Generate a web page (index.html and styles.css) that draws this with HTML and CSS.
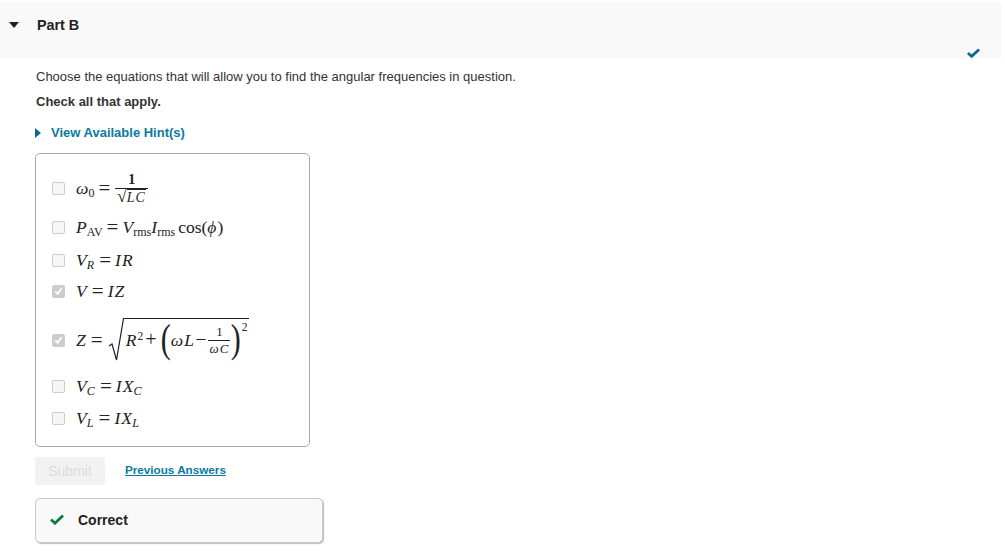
FILE: index.html
```html
<!DOCTYPE html>
<html lang="en">
<head>
<meta charset="utf-8">
<title>Part B</title>
<link rel="stylesheet" href="styles.css">
</head>
<body>
<section class="part">
  <header class="part-head">
    <span class="caret-down"></span>
    <h2 class="part-title">Part B</h2>
    <svg class="done" viewBox="0 0 14 10" width="13" height="10"><path d="M1 5l4 3.600L13 1.200" fill="none" stroke="#0a6b8a" stroke-width="3"/></svg>
  </header>
  <div class="part-body">
    <p class="prompt">Choose the equations that will allow you to find the angular frequencies in question.</p>
    <p class="instr">Check all that apply.</p>
    <div class="hint"><span class="caret-right"></span><span>View Available Hint(s)</span></div>
    <div class="choices">
      <div class="row r1">
        <span class="box"></span>
        <span class="m"><i>ω</i><sub>0</sub><span class="eq">=</span><span class="frac"><span class="num">1</span><span class="den"><span class="rt">√</span><i class="ol">LC</i></span></span></span>
      </div>
      <div class="row r2">
        <span class="box"></span>
        <span class="m"><i>P</i><sub>AV</sub><span class="eq">=</span><i>V</i><sub>rms</sub><i>I</i><sub>rms</sub><span class="fn">cos(<i>ϕ</i>)</span></span>
      </div>
      <div class="row r3">
        <span class="box"></span>
        <span class="m"><i>V</i><sub><i>R</i></sub><span class="eq">=</span><i>IR</i></span>
      </div>
      <div class="row r4">
        <span class="box on"><svg viewBox="0 0 12 12" width="12" height="12"><path d="M2.500 6.500l2.500 2.500L9.500 3" fill="none" stroke="#fff" stroke-width="2"/></svg></span>
        <span class="m"><i>V</i><span class="eq">=</span><i>IZ</i></span>
      </div>
      <div class="row r5">
        <span class="box on"><svg viewBox="0 0 12 12" width="12" height="12"><path d="M2.500 6.500l2.500 2.500L9.500 3" fill="none" stroke="#fff" stroke-width="2"/></svg></span>
        <span class="m mz"><span class="zlead"><i>Z</i><span class="eq">=</span></span>
          <svg class="bigroot" viewBox="0 0 18 44" width="18" height="44"><path d="M1 28l3-2 4.500 16L15.500 .5H18" fill="none" stroke="#222" stroke-width="1.200"/></svg>
          <span class="rad"><span class="radin"><i>R</i><sup>2</sup><span class="pl">+</span><span class="paren">(</span><i>ωL</i><span class="mi">−</span><span class="frac small"><span class="num">1</span><span class="den"><i>ωC</i></span></span><span class="paren">)</span><sup class="sq">2</sup></span></span>
        </span>
      </div>
      <div class="row r6">
        <span class="box"></span>
        <span class="m"><i>V</i><sub><i>C</i></sub><span class="eq">=</span><i>IX</i><sub><i>C</i></sub></span>
      </div>
      <div class="row r7">
        <span class="box"></span>
        <span class="m"><i>V</i><sub><i>L</i></sub><span class="eq">=</span><i>IX</i><sub><i>L</i></sub></span>
      </div>
    </div>
    <div class="actions">
      <button class="submit" type="button" disabled>Submit</button>
      <a class="prev" href="#">Previous Answers</a>
    </div>
    <div class="result">
      <svg viewBox="0 0 14 11" width="14" height="11"><path d="M1 5.500l4 3.700L13 1.500" fill="none" stroke="#0b7a3e" stroke-width="2.800"/></svg>
      <span>Correct</span>
    </div>
  </div>
</section>
</body>
</html>
```
FILE: styles.css
```css
* { box-sizing: border-box; }
html, body { margin: 0; padding: 0; background: #fff; }
body { font-family: "Liberation Sans", Arial, sans-serif; font-size: 13px; color: #333; width: 1005px; height: 557px; overflow: hidden; }
.part { padding-top: 2px; width: 1001px; }
.part-head { position: relative; height: 56px; background: #f9f9f9; display: flex; align-items: flex-start; padding: 15px 0 0 9px; }
.caret-down { width: 0; height: 0; margin-top: 5px; border-left: 5.500px solid transparent; border-right: 5.500px solid transparent; border-top: 6px solid #222; }
.part-title { margin: 0 0 0 18px; font-size: 14.300px; line-height: 16px; font-weight: 700; color: #222; }
.done { position: absolute; left: 967px; top: 46px; }
.part-body { padding: 11px 0 0 35px; }
.prompt { margin: 0 0 0 1px; font-size: 13px; line-height: 16px; color: #333; }
.instr { margin: 9px 0 0 1px; font-size: 13px; line-height: 16px; font-weight: 700; color: #333; }
.hint { margin-top: 15px; display: flex; align-items: center; gap: 10px; font-size: 13px; line-height: 16px; font-weight: 700; color: #0b7a9e; }
.caret-right { width: 0; height: 0; border-top: 5px solid transparent; border-bottom: 5px solid transparent; border-left: 6px solid #0b6a8a; }
.choices { margin-top: 12px; width: 275px; height: 294px; border: 1px solid #a8a8a8; border-radius: 5px; padding: 14px 0 0 16px; }
.row { display: flex; align-items: center; gap: 11px; }
.r1 { height: 40px; }
.r2 { height: 38px; }
.r3 { height: 28px; }
.r4 { height: 34px; }
.r5 { height: 64px; }
.r6 { height: 28px; }
.r7 { height: 36px; }
.box { flex: none; width: 13px; height: 13px; border: 1px solid #ccc; border-radius: 2px; background: #f6f6f6; display: flex; align-items: center; justify-content: center; }
.box.on { background: #ccc; border-color: #ccc; }
.m { display: inline-flex; align-items: baseline; font-family: "Liberation Serif", "DejaVu Serif", serif; font-size: 17.500px; color: #222; white-space: nowrap; line-height: 1; }
.m i { letter-spacing: 1.100px; }
.m sub { font-size: 12px; vertical-align: baseline; position: relative; top: 3px; line-height: 0; margin-left: -1px; letter-spacing: 0; }
.m sup { font-size: 11.500px; position: relative; top: -6px; line-height: 0; vertical-align: baseline; }
.eq { margin: 0 4px; font-size: 21px; line-height: 17px; position: relative; top: 1px; font-style: normal; }
.fn { margin-left: 3px; }
.frac { display: inline-flex; flex-direction: column; align-items: center; font-size: 14px; position: relative; top: -10px; margin-left: 1px; margin-bottom: -18px; }
.num { display: block; width: 100%; text-align: center; font-weight: 700; border-bottom: 1px solid #222; padding: 0 0 2px; line-height: 13px; }
.den { display: block; line-height: 15px; padding: 0 2px; }
.rt { font-size: 17px; }
.ol { border-top: 1px solid #222; }
.mz { align-items: center; }
.zlead { display: inline-flex; align-items: baseline; margin-right: 2px; }
.bigroot { flex: none; margin-left: -1px; }
.rad { display: flex; height: 44px; border-top: 1px solid #222; align-items: center; width: 123px; }
.radin { display: inline-flex; align-items: baseline; }
.pl { margin: 0 3px 0 2px; font-size: 20px; line-height: 17px; }
.paren { font-size: 40px; line-height: 0; position: relative; top: 6px; transform: scaleX(.75); margin: 0 -1px; }
.mi { margin: 0 2px 0 0; font-size: 20px; line-height: 17px; }
.frac.small { top: -10px; font-size: 13px; margin-left: 0; }
.small .num { font-weight: 400; }
.small .den { padding: 0 1px; }
.sq { top: -15px !important; font-size: 12px; margin-left: 0; }
.actions { margin-top: 10px; display: flex; align-items: center; gap: 20px; }
.submit { width: 70px; height: 28px; border: 0; border-radius: 2px; background: #f2f2f2; color: #dcdcdc; font: 400 14px "Liberation Sans", Arial, sans-serif; padding: 0; }
.prev { font-size: 11.700px; line-height: 16px; font-weight: 700; color: #0b7a9e; margin-top: -3px; }
.result { margin-top: 13px; width: 288px; height: 45px; display: flex; align-items: center; gap: 14px; padding: 0 0 2px 14px; background: #f9f9f9; border: 1px solid #c8c8c8; border-radius: 5px; box-shadow: 1px 1px 1px #bbb; font-size: 14px; font-weight: 700; color: #222; }
```
